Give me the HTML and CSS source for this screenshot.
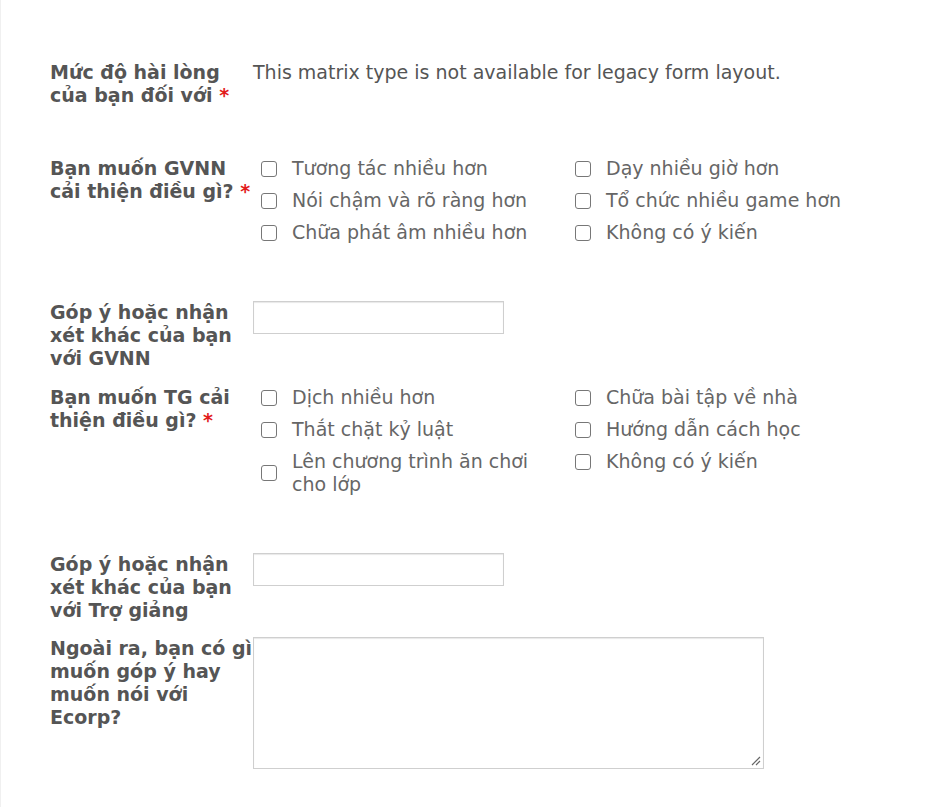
FILE: index.html
```html
<!DOCTYPE html>
<html lang="vi">
<head>
<meta charset="utf-8">
<title>Form</title>
<link rel="stylesheet" href="styles.css">
</head>
<body>
<div class="page">
  <div class="form">
    <div class="row row-matrix">
      <div class="label">Mức độ hài lòng của bạn đối với <span class="req">*</span></div>
      <div class="content"><div class="note">This matrix type is not available for legacy form layout.</div></div>
    </div>

    <div class="row row-check">
      <div class="label">Bạn muốn GVNN cải thiện điều gì? <span class="req">*</span></div>
      <div class="content">
        <div class="checks">
          <div class="col">
            <label class="opt"><span class="box"></span><span class="txt">Tương tác nhiều hơn</span></label>
            <label class="opt"><span class="box"></span><span class="txt">Nói chậm và rõ ràng hơn</span></label>
            <label class="opt"><span class="box"></span><span class="txt">Chữa phát âm nhiều hơn</span></label>
          </div>
          <div class="col">
            <label class="opt"><span class="box"></span><span class="txt">Dạy nhiều giờ hơn</span></label>
            <label class="opt"><span class="box"></span><span class="txt">Tổ chức nhiều game hơn</span></label>
            <label class="opt"><span class="box"></span><span class="txt">Không có ý kiến</span></label>
          </div>
        </div>
      </div>
    </div>

    <div class="row">
      <div class="label">Góp ý hoặc nhận xét khác của bạn với GVNN</div>
      <div class="content"><div class="input"></div></div>
    </div>

    <div class="row row-check">
      <div class="label">Bạn muốn TG cải thiện điều gì? <span class="req">*</span></div>
      <div class="content">
        <div class="checks">
          <div class="col">
            <label class="opt"><span class="box"></span><span class="txt">Dịch nhiều hơn</span></label>
            <label class="opt"><span class="box"></span><span class="txt">Thắt chặt kỷ luật</span></label>
            <label class="opt"><span class="box"></span><span class="txt">Lên chương trình ăn chơi cho lớp</span></label>
          </div>
          <div class="col">
            <label class="opt"><span class="box"></span><span class="txt">Chữa bài tập về nhà</span></label>
            <label class="opt"><span class="box"></span><span class="txt">Hướng dẫn cách học</span></label>
            <label class="opt"><span class="box"></span><span class="txt">Không có ý kiến</span></label>
          </div>
        </div>
      </div>
    </div>

    <div class="row row-tight">
      <div class="label">Góp ý hoặc nhận xét khác của bạn với Trợ giảng</div>
      <div class="content"><div class="input"></div></div>
    </div>

    <div class="row">
      <div class="label">Ngoài ra, bạn có gì muốn góp ý hay muốn nói với Ecorp?</div>
      <div class="content">
        <div class="textarea"><svg class="grip" width="10" height="10" viewBox="0 0 10 10"><path d="M9 1 L1 9 M9 5 L5 9" stroke="#666" stroke-width="1.2" fill="none"/></svg></div>
      </div>
    </div>
  </div>
</div>
</body>
</html>
```

FILE: styles.css
```css
html, body {
  margin: 0;
  padding: 0;
  background: #fff;
}
.page {
  min-height: 807px;
  border-left: 1px solid #f0f0f0;
  box-sizing: border-box;
  font-family: "DejaVu Sans", Verdana, sans-serif;
  font-size: 19px;
  line-height: 23px;
}
.form {
  padding: 61px 0 0 49px;
}
.row {
  display: flex;
  align-items: flex-start;
  margin-bottom: 16px;
}
.row-matrix {
  margin-bottom: 50px;
}
.row-tight {
  margin-bottom: 15px;
}
.label {
  width: 203px;
  flex: none;
  font-weight: bold;
  color: #555;
}
.req {
  color: #e21b1b;
}
.content {
  flex: none;
}
.note {
  color: #555;
}
.checks {
  display: flex;
  padding-bottom: 32px;
}
.col {
  width: 314px;
  display: flex;
  flex-direction: column;
}
.opt {
  display: flex;
  align-items: center;
  margin-bottom: 9px;
  color: #666;
}
.box {
  flex: none;
  width: 14px;
  height: 14px;
  border: 1px solid #777;
  border-radius: 3px;
  margin-left: 8px;
  margin-right: 15px;
  background: #fff;
}
.txt {
  width: 250px;
}
.input {
  width: 249px;
  height: 31px;
  border: 1px solid #cfcfcf;
  box-shadow: inset 0 1px 1px #e8e8e8;
  background: #fff;
}
.textarea {
  position: relative;
  width: 509px;
  height: 130px;
  border: 1px solid #cfcfcf;
  box-shadow: inset 0 1px 1px #e8e8e8;
  background: #fff;
}
.grip {
  position: absolute;
  right: 2px;
  bottom: 2px;
}
```
